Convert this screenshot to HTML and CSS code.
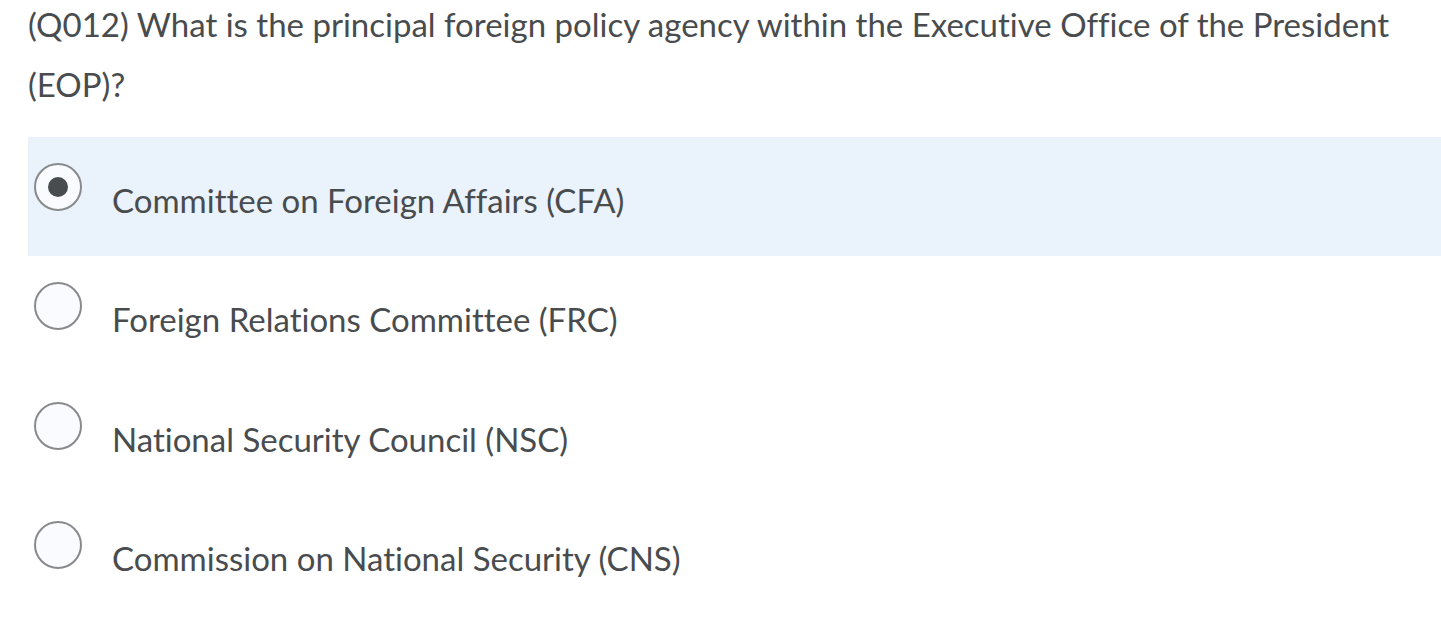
FILE: index.html
```html
<!DOCTYPE html>
<html>
<head>
<meta charset="utf-8">
<link rel="stylesheet" href="styles.css">
</head>
<body>
<div class="quiz">
  <p class="question">(Q012) What is the principal foreign policy agency within the Executive Office of the President (EOP)?</p>
  <ul class="options">
    <li class="option selected"><span class="radio"><span class="dot"></span></span><span class="label">Committee on Foreign Affairs (CFA)</span></li>
    <li class="option"><span class="radio"></span><span class="label">Foreign Relations Committee (FRC)</span></li>
    <li class="option"><span class="radio"></span><span class="label">National Security Council (NSC)</span></li>
    <li class="option"><span class="radio"></span><span class="label">Commission on National Security (CNS)</span></li>
  </ul>
</div>
</body>
</html>
```
FILE: styles.css
```css
html, body {
  margin: 0;
  padding: 0;
  background: #fff;
}
body {
  font-family: Lato, "Noto Sans", sans-serif;
  color: #494c4e;
  font-variant-ligatures: none;
}
.quiz {
  padding-left: 28px;
}
.question {
  margin: -6px 0 0 0;
  font-size: 33px;
  line-height: 60px;
}
.options {
  list-style: none;
  margin: 23px 0 0 0;
  padding: 0;
}
.option {
  display: flex;
  align-items: flex-start;
  height: 119.3px;
  padding-left: 6px;
  box-sizing: border-box;
}
.option.selected {
  background: #eaf2fb;
}
.radio {
  box-sizing: border-box;
  width: 48px;
  height: 48px;
  border-radius: 50%;
  border: 2px solid #888a8c;
  background: #f9fbff;
  display: flex;
  align-items: center;
  justify-content: center;
  margin-top: 26px;
  flex-shrink: 0;
}
.dot {
  width: 20px;
  height: 20px;
  border-radius: 50%;
  background: #494c4e;
}
.label {
  font-size: 33px;
  line-height: 40px;
  margin-top: 43px;
  margin-left: 30px;
}
```
